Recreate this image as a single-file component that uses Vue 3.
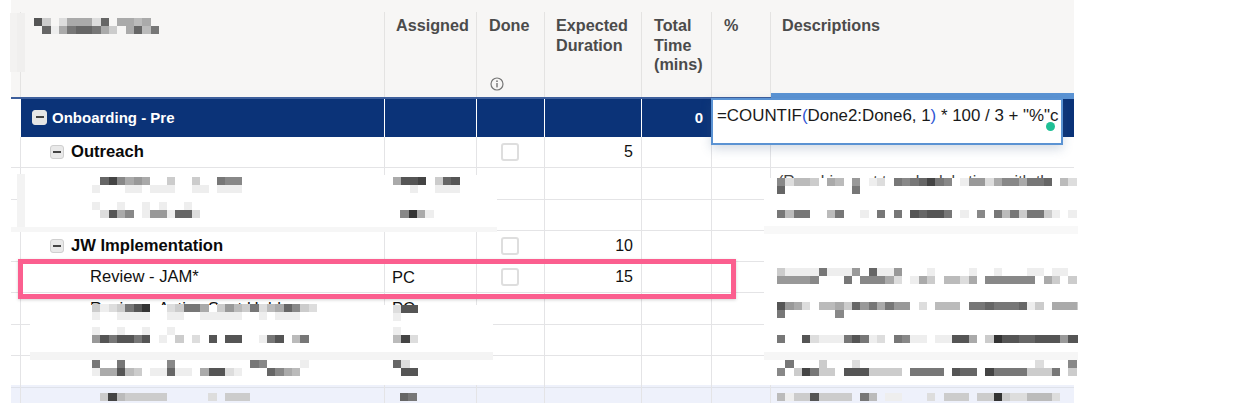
<script setup>
const headers = [
  { key: 'name', lines: [''] },
  { key: 'assigned', lines: ['Assigned'] },
  { key: 'done', lines: ['Done'], info: true, nudge: true },
  { key: 'expected', lines: ['Expected', 'Duration'] },
  { key: 'total', lines: ['Total', 'Time', '(mins)'], nudge: true },
  { key: 'pct', lines: ['%'], nudge: true },
  { key: 'desc', lines: ['Descriptions'] }
]

const rows = [
  { id: 'r1', cls: 'section', name: 'Onboarding - Pre', toggle: true, total: '0' },
  { id: 'r2', cls: 'group', name: 'Outreach', toggle: true, check: true, expected: '5' },
  { id: 'r3', cls: 'task', desc: '(Reaching out to schedule time with the' },
  { id: 'r4', cls: 'task' },
  { id: 'r5', cls: 'group', name: 'JW Implementation', toggle: true, check: true, expected: '10' },
  { id: 'r6', cls: 'task', name: 'Review - JAM*', assigned: 'PC', check: true, expected: '15' },
  { id: 'r7', cls: 'task', name: 'Review - Active Seat Holder', assigned: 'PC' },
  { id: 'r8', cls: 'task' },
  { id: 'r9', cls: 'task' },
  { id: 'r10', cls: 'task tinted' }
]

const patches = [
  { x: 10, y: 13, w: 15, h: 59, c: '#f3f2f1' },
  { x: 17, y: 13, w: 8, h: 59, c: '#f0efee' },
  { x: 25, y: 175, w: 472, h: 52, c: '#fff' },
  { x: 17, y: 174, w: 8, h: 53, c: '#f3f3f3' },
  { x: 11, y: 227, w: 486, h: 5, c: '#f6f6f6' },
  { x: 764, y: 178, w: 314, h: 48, c: '#fff' },
  { x: 764, y: 226, w: 314, h: 8, c: '#f8f8f8' },
  { x: 764, y: 234, w: 314, h: 118, c: '#fff' },
  { x: 764, y: 352, w: 314, h: 8, c: '#f6f6f6' },
  { x: 764, y: 360, w: 314, h: 25, c: '#fff' },
  { x: 30, y: 305, w: 463, h: 47, c: '#fff' },
  { x: 30, y: 352, w: 463, h: 8, c: '#f4f4f4' },
  { x: 30, y: 360, w: 463, h: 25, c: '#fff' }
]

const mosaics = [
  { x: 34, y: 18, rows: ['5cfdaaad6faaba', 'f6ea7667acfa6b7'] },
  { x: 92, y: 177, rows: ['f648a9affcffc.f788', 'efffeefeeeffeefeee'] },
  { x: 393, y: 177, rows: ['a554fc65', 'ffeffeee'] },
  { x: 777, y: 178, rows: ['8dbbcfabf9fedf7876478fe99da88a776fbd', '6ffffffff7ffffffffffffffffffffffffffff'] },
  { x: 92, y: 202, rows: ['effeffefeffeff', 'fd5a8fe99e66df'] },
  { x: 392, y: 210, rows: ['f83ae'] },
  { x: 777, y: 210, rows: ['7b77ffb7ffe' + 'f7f7f56557fef8f7b7c77cefe'] },
  { x: 777, y: 268, rows: ['ceeee7eee9f6ee9fffeffffeffefffeefeefffee', '99998fff7f888adfeacfbbdaf888888fac.c'] },
  { x: 92, y: 304, rows: ['cedc753ffdc77afc9bc7dba68cd', 'effeeeeffeeffeeeeeffefeee'] },
  { x: 393, y: 305, rows: ['d55', 'eff'] },
  { x: 777, y: 302, rows: ['59adfbbac697a799fdfbbbf7767776ecfaaac', '7ffffff8'] },
  { x: 92, y: 327, rows: ['effeffeffefffffffffff', '9575575fefcfdf5f55ffe75fb7'] },
  { x: 393, y: 327, rows: ['eff', 'b4d'] },
  { x: 777, y: 335, rows: ['7ff5deee757edf78eefee55afc35566555955'] },
  { x: 92, y: 360, rows: ['7ff7fffff8fffffffff78ffffe', 'eaa5bcfee6eefa55defff68ab'] },
  { x: 393, y: 360, rows: ['6d', 'f55'] },
  { x: 777, y: 360, rows: ['f7fffcfffdfffffffffffffffffffffdfff8', '8fc47ccf555ccccf7777f566f47777ccc7fc'] },
  { x: 100, y: 393, rows: ['c4bcccccfffffdfccc'] },
  { x: 400, y: 393, rows: ['67'] },
  { x: 777, y: 393, rows: ['becc5ccccf7bfeefffdfcccfcc3cddbbbd'] }
]

const cells = (row) => row.split('').map((ch) => {
  const level = parseInt(ch, 16)
  if (ch === 'f' || ch === '.') return 'transparent'
  const v = level * 17
  return `rgb(${v},${v},${v})`
})
</script>

<template>
  <div class="page">
    <div class="sheet">
      <div class="head grid">
        <div class="gutter"></div>
        <div v-for="h in headers" :key="h.key" class="hcell" :class="{ nudge: h.nudge }">
          <div v-for="line in h.lines" :key="line" class="hline">{{ line }}</div>
          <svg v-if="h.info" class="info" viewBox="0 0 14 14" width="14" height="14">
            <circle cx="7" cy="7" r="6" fill="none" stroke="#767676" stroke-width="1.2" />
            <circle cx="7" cy="4.2" r="0.9" fill="#767676" />
            <rect x="6.3" y="6" width="1.4" height="4.4" fill="#767676" />
          </svg>
        </div>
      </div>

      <div v-for="r in rows" :key="r.id" class="grid row" :class="[r.id, r.cls]">
        <div class="gutter"></div>
        <div class="cell name">
          <span v-if="r.toggle" class="toggle"><i></i></span>
          <span v-if="r.name" class="label">{{ r.name }}</span>
        </div>
        <div class="cell assigned">{{ r.assigned }}</div>
        <div class="cell done"><span v-if="r.check" class="check"></span></div>
        <div class="cell num">{{ r.expected }}</div>
        <div class="cell num">{{ r.total }}</div>
        <div class="cell"></div>
        <div class="cell desc">{{ r.desc }}</div>
      </div>

      <div class="strip"></div>

      <div
        v-for="(p, i) in patches"
        :key="'p' + i"
        class="patch"
        :style="{ left: p.x + 'px', top: p.y + 'px', width: p.w + 'px', height: p.h + 'px', background: p.c }"
      ></div>

      <div
        v-for="(m, i) in mosaics"
        :key="'m' + i"
        class="mosaic"
        :style="{ left: m.x + 'px', top: m.y + 'px' }"
      >
        <div v-for="(line, j) in m.rows" :key="j" class="mline">
          <span v-for="(c, k) in cells(line)" :key="k" :style="{ background: c }"></span>
        </div>
      </div>

      <div class="editor">
        <span>=COUNTIF<b>(</b>Done2:Done6, 1<b>)</b> * 100 / 3 + "%"c</span>
        <i class="dot"></i>
      </div>

      <div class="highlight"></div>
    </div>
  </div>
</template>

<style>
html, body { margin: 0; background: #fff; overflow: hidden; }
</style>

<style scoped>
.page {
  width: 1252px;
  height: 403px;
  overflow: hidden;
  background: #fff;
  font-family: "Liberation Sans", Arial, sans-serif;
  color: #111;
}
.sheet {
  position: relative;
  width: 1078px;
  height: 403px;
  overflow: hidden;
}
.grid {
  display: grid;
  grid-template-columns: 9px 364px 92px 68px 97px 70px 59px 304px;
  width: 1063px;
  margin-left: 11px;
}
.head {
  height: 97px;
  box-sizing: border-box;
  padding-top: 12px;
  background: #f7f6f5;
  box-shadow: -11px 0 0 #fff;
}
.hcell {
  position: relative;
  border-left: 1px solid #e4e3e2;
  padding: 4px 0 0 11px;
  color: #4b4b4b;
  font-size: 16.2px;
  font-weight: 700;
  line-height: 19.5px;
}
.hcell.nudge { padding-left: 12px; }
.hline { white-space: nowrap; }
.info {
  position: absolute;
  left: 13px;
  bottom: 6px;
}
.row {
  box-sizing: border-box;
  border-bottom: 1px solid #e4e4e6;
  height: 31px;
  font-size: 16.5px;
}
.gutter { min-width: 0; }
.cell {
  border-left: 1px solid #e4e4e6;
  display: flex;
  align-items: center;
  min-width: 0;
  white-space: nowrap;
  overflow: hidden;
}
.r1 { height: 40px; background: #0b3378; color: #fff; border-top: 2px solid #3d5f9c; border-bottom: 0; }
.r3 { height: 32px; }
.r4, .r5, .r6, .r8, .r9 { height: 31px; }
.r7 { height: 32px; }
.r10 { height: 18px; margin-top: -2px; border-bottom: 0; background: linear-gradient(#eef1fb 2px, #dfe2ea 2px, #dfe2ea 3px, #eef1fb 3px); }
.r1 .gutter { background: #fff; }
.r1 .cell { border-left-color: #fff; padding-bottom: 2px; }
.r1 .name { padding-left: 11px; }
.r1 .label { font-size: 15px; font-weight: 700; margin-left: 5px; }
.r1 .num { font-weight: 700; font-size: 15px; }
.r1 .cell:nth-child(7), .r1 .cell:nth-child(8) { border-left: 0; }
.group .name { padding-left: 29px; }
.group .label { font-size: 16.6px; font-weight: 700; margin-left: 7px; color: #0a0a0a; }
.task .name { padding-left: 69px; }
.task .label { font-size: 16.6px; }
.assigned { padding-left: 7px; font-size: 16.5px; }
.done { justify-content: center; padding-right: 2px; }
.num { justify-content: flex-end; padding-right: 8px; font-size: 16px; }
.r3 .desc { align-items: flex-start; padding: 5px 0 0 7px; font-size: 16px; color: #444; }
.toggle {
  width: 14px;
  height: 14px;
  box-sizing: border-box;
  border-radius: 3px;
  background: #e9e9e9;
  border: 1px solid #cfcfcf;
  display: inline-flex;
  align-items: center;
  justify-content: center;
  flex: none;
}
.toggle i {
  display: block;
  width: 8px;
  height: 2px;
  background: #444;
}
.r1 .toggle { width: 15px; height: 15px; background: #e6e6e6; border-color: #e6e6e6; }
.check {
  width: 18px;
  height: 18px;
  box-sizing: border-box;
  border: 2px solid #dedede;
  border-radius: 3px;
  background: #fff;
}
.strip {
  position: absolute;
  left: 771px;
  top: 93px;
  width: 303px;
  height: 6px;
  background: #5b93d3;
}
.patch, .mosaic { position: absolute; }
.mosaic { filter: blur(0.2px); }
.mline { display: flex; height: 8px; }
.mline span { display: block; width: 8.33px; height: 8px; flex: none; }
.editor {
  position: absolute;
  left: 711px;
  top: 98px;
  width: 352px;
  height: 47px;
  box-sizing: border-box;
  background: #fff;
  border: 2px solid #5b93d3;
  box-shadow: 0 4px 10px rgba(60, 90, 130, 0.22);
  padding: 6px 0 0 4px;
  font-size: 16.9px;
  line-height: 20px;
  white-space: nowrap;
  color: #1a1a1a;
}
.editor b { font-weight: 400; color: #2f55d4; }
.dot {
  position: absolute;
  left: 333px;
  top: 22px;
  width: 9px;
  height: 9px;
  border-radius: 50%;
  background: #1fc096;
}
.highlight {
  position: absolute;
  left: 18px;
  top: 259px;
  width: 718px;
  height: 40px;
  box-sizing: border-box;
  border: 5px solid #fb5f8f;
  box-shadow: 0 1px 3px rgba(0, 0, 0, 0.18);
}
</style>
